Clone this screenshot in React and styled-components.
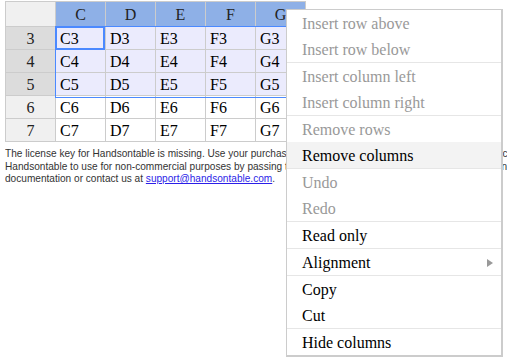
import React from "react";
import styled, { createGlobalStyle } from "styled-components";

const GlobalStyle = createGlobalStyle`
	html, body {
		margin: 0;
		padding: 0;
		background: #fff;
		overflow: hidden;
	}
	body {
		width: 507px;
		height: 362px;
		position: relative;
	}
`;

const Page = styled.div`
	position: relative;
	width: 507px;
	height: 362px;
	padding: 1px 0 0 5px;
	box-sizing: border-box;
	overflow: hidden;
	font-family: "Liberation Serif", "Times New Roman", serif;
	color: #000;
`;

const TableWrap = styled.div`
	position: relative;
	width: max-content;
`;

const Grid = styled.table`
	border-collapse: separate;
	border-spacing: 0;
	table-layout: fixed;
	font-size: 16px;
`;

const HeadCell = styled.th`
	width: 49px;
	height: ${(p) => (p.$top ? "24px" : "22px")};
	padding: 0;
	font-weight: normal;
	text-align: center;
	vertical-align: middle;
	color: #222;
	background: ${(p) => p.$bg || "#f0f0f0"};
	border-right: 1px solid #ccc;
	border-bottom: 1px solid #ccc;
	border-top: ${(p) => (p.$top ? "1px solid #ccc" : "none")};
	border-left: ${(p) => (p.$first ? "1px solid #ccc" : "none")};
	line-height: 21px;
`;

const Cell = styled.td`
	width: 45px;
	height: 22px;
	padding: 0 0 0 4px;
	line-height: 21px;
	vertical-align: middle;
	background: ${(p) => (p.$area ? "#ebebfd" : "#fff")};
	border-right: 1px solid #ccc;
	border-bottom: 1px solid #ccc;
	white-space: nowrap;
	overflow: hidden;
`;

const AreaBorder = styled.div`
	position: absolute;
	left: 50px;
	top: 25px;
	width: 260px;
	height: 70px;
	border: 1px solid #4b89ff;
	pointer-events: none;
`;

const CurrentBorder = styled.div`
	position: absolute;
	left: 50px;
	top: 25px;
	width: 46px;
	height: 20px;
	border: 2px solid #4b89ff;
	pointer-events: none;
`;

const Notice = styled.div`
	margin-top: 6px;
	width: 502px;
	overflow: hidden;
	font-family: "Liberation Sans", Arial, sans-serif;
	font-size: 10.1px;
	line-height: 12.5px;
	color: #333;
	white-space: nowrap;
`;

const Link = styled.a`
	color: #2b1ee8;
	text-decoration: underline;
`;

const Menu = styled.div`
	position: absolute;
	left: 286px;
	top: 9px;
	width: 214px;
	background: #fff;
	border-style: solid;
	border-color: #ccc;
	border-width: 1px 2px 2px 1px;
	font-family: "Liberation Serif", "Times New Roman", serif;
	font-size: 16px;
`;

const Item = styled.div`
	position: relative;
	height: 24px;
	line-height: 24px;
	padding: 2px 0 0 15px;
	color: ${(p) => (p.$disabled ? "#999" : "#000")};
	background: ${(p) => (p.$active ? "#f3f3f3" : "#fff")};
	white-space: nowrap;
`;

const Separator = styled.div`
	height: 1px;
	background: #e6e6e6;
`;

const Arrow = styled.span`
	position: absolute;
	right: 8px;
	top: 10px;
	width: 0;
	height: 0;
	border-top: 4px solid transparent;
	border-bottom: 4px solid transparent;
	border-left: 6px solid #999;
`;

const cols = ["C", "D", "E", "F", "G"];
const rows = [3, 4, 5, 6, 7];

const menu = [
	{ label: "Insert row above", disabled: true },
	{ label: "Insert row below", disabled: true },
	"sep",
	{ label: "Insert column left", disabled: true },
	{ label: "Insert column right", disabled: true },
	"sep",
	{ label: "Remove rows", disabled: true },
	{ label: "Remove columns", active: true },
	"sep",
	{ label: "Undo", disabled: true },
	{ label: "Redo", disabled: true },
	"sep",
	{ label: "Read only" },
	"sep",
	{ label: "Alignment", submenu: true },
	"sep",
	{ label: "Copy" },
	{ label: "Cut" },
	"sep",
	{ label: "Hide columns" },
];

export default function App() {
	return (
		<Page>
			<GlobalStyle />
			<TableWrap>
				<Grid>
					<thead>
						<tr>
							<HeadCell $top $first />
							{cols.map((c) => (
								<HeadCell key={c} $top $bg="#8eb0e7">
									{c}
								</HeadCell>
							))}
						</tr>
					</thead>
					<tbody>
						{rows.map((r) => (
							<tr key={r}>
								<HeadCell $first $bg={r <= 5 ? "#dcdcdc" : "#f0f0f0"}>
									{r}
								</HeadCell>
								{cols.map((c) => (
									<Cell key={c} $area={r <= 5}>
										{c}
										{r}
									</Cell>
								))}
							</tr>
						))}
					</tbody>
				</Grid>
				<AreaBorder />
				<CurrentBorder />
			</TableWrap>
			<Notice>
				The license key for Handsontable is missing. Use your purchased key to activate the product. Alternatively, you can activate
				<br />
				Handsontable to use for non-commercial purposes by passing the key: 'non-commercial-and-evaluation'. If you need any help, <Link href="#">read the documentation</Link>
				<br />
				documentation or contact us at <Link href="#">support@handsontable.com</Link>.
			</Notice>
			<Menu>
				{menu.map((m, i) =>
					m === "sep" ? (
						<Separator key={i} />
					) : (
						<Item key={i} $disabled={m.disabled} $active={m.active}>
							{m.label}
							{m.submenu && <Arrow />}
						</Item>
					)
				)}
			</Menu>
		</Page>
	);
}
